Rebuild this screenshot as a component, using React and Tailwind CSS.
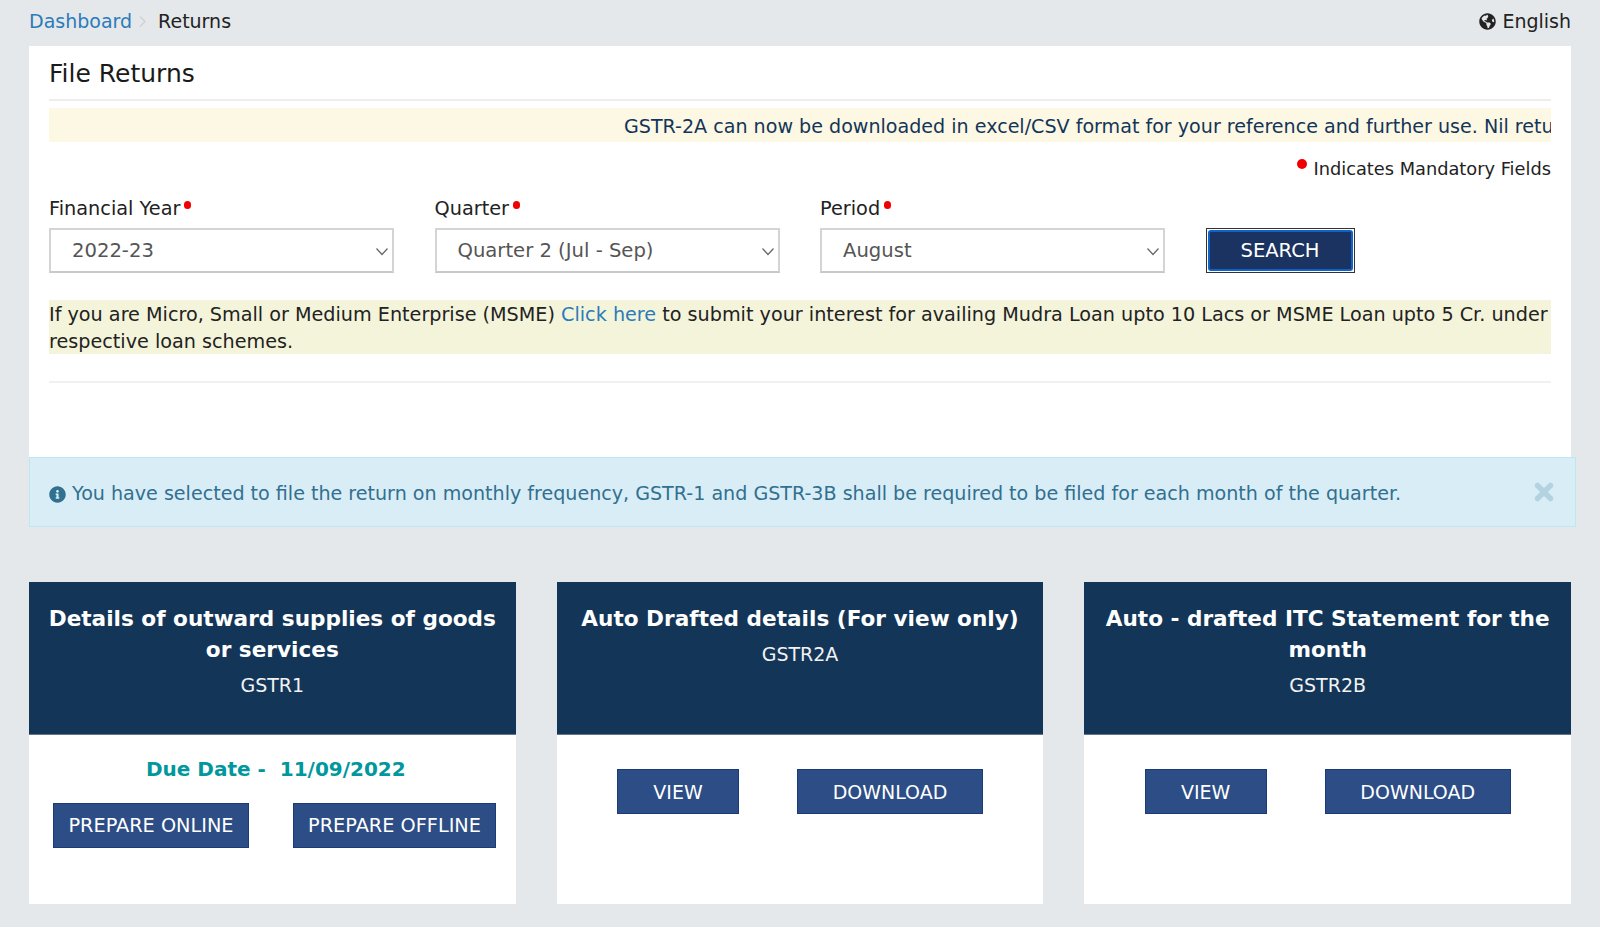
import React from "react";
import { FaGlobeAmericas, FaInfoCircle } from "react-icons/fa";

const Btn = ({ children, className = "" }) => (
  <button className={"bg-[#2c4d85] border border-[#1d3a78] text-white flex items-center justify-center pt-[2px] " + className}>{children}</button>
);

const Chevron = () => (
  <svg width="14" height="9" viewBox="0 0 14 9" className="absolute right-[3px] top-[17px]" fill="none" stroke="#666" strokeWidth="1.2"><path d="M1.5 1.5 7 7.5l5.5-6" /></svg>
);

const Select = ({ label, value }) => (
  <div className="w-[345px]">
    <div className="h-[35px] text-[19.3px] leading-[32px] text-[#222] flex">
      {label}<span className="ml-[4px] mt-[8px] w-[7px] h-[8px] rounded-full bg-[#f00000]" />
    </div>
    <div className="relative h-[45px] border-2 border-[#d4d4d4] border-b-[#c8c8c8] bg-white pl-[21px] flex items-center text-[19.6px] text-[#555]">
      {value}<Chevron />
    </div>
  </div>
);

const Card = ({ title, code, children }) => (
  <div className="bg-white flex-1 flex flex-col">
    <div className="h-[153px] bg-[#133558] border-b border-[#66758a] text-white text-center px-[12px] pt-[21px]">
      <div className="text-[21.6px] leading-[31px] font-bold">{title}</div>
      <div className="text-[19px] leading-[23px] mt-[9px] text-[#f2f2f2]">{code}</div>
    </div>
    {children}
  </div>
);

const TwoButtons = () => (
  <div className="flex justify-center gap-[58px] pt-[34px]">
    <Btn className="w-[122px] h-[45px] text-[19px]">VIEW</Btn>
    <Btn className="w-[186px] h-[45px] text-[19px]">DOWNLOAD</Btn>
  </div>
);

export default function App() {
  return (
    <div className="h-[927px] overflow-hidden bg-[#e4e8eb] px-[29px] font-['DejaVu_Sans',Verdana,sans-serif]">
      <div className="h-[42px] mb-[4px] flex items-center justify-between text-[19px]">
        <div className="flex items-center">
          <span className="text-[#2b7bba]">Dashboard</span>
          <svg width="7" height="11" viewBox="0 0 7 11" fill="none" stroke="#cfcfcf" strokeWidth="1.2" className="ml-[7px] mr-[12px]"><path d="M1 .5 6 5.5 1 10.5" /></svg>
          <span className="text-[#222]">Returns</span>
        </div>
        <div className="flex items-center gap-[6px] text-[#222]"><FaGlobeAmericas size={17} />English</div>
      </div>

      <div className="bg-white h-[411px] px-[20px]">
        <div className="h-[55px] border-b-2 border-[#eeeeee] text-[25px] leading-[56px] text-[#1a1a1a]">File Returns</div>
        <div className="mt-[7px] h-[34px] bg-[#fdf8e4] overflow-hidden whitespace-nowrap pl-[575px] text-[19.1px] leading-[38px] text-[#133558]">
          GSTR-2A can now be downloaded in excel/CSV format for your reference and further use. Nil return
        </div>
        <div className="mt-[13px] h-[27px] flex justify-end text-[17.8px] leading-[27px] text-[#222]">
          <span className="mt-[4px] mr-[6px] w-[10px] h-[10px] rounded-full bg-[#f00000]" />Indicates Mandatory Fields
        </div>
        <div className="mt-[11px] flex gap-[40.5px] items-end">
          <Select label="Financial Year" value="2022-23" />
          <Select label="Quarter" value="Quarter 2 (Jul - Sep)" />
          <Select label="Period" value="August" />
          <div className="w-[149px] h-[45px] border border-[#333] bg-white p-px">
            <button className="w-full h-full bg-[#1a3360] text-white text-[19.5px] rounded-[3px] border-2 border-[#0f62c9]">SEARCH</button>
          </div>
        </div>
        <div className="mt-[27px] h-[54px] pt-px bg-[#f4f4da] text-[19.2px] leading-[27px] text-[#222]">
          If you are Micro, Small or Medium Enterprise (MSME) <span className="text-[#2b7bba]">Click here</span> to submit your interest for availing Mudra Loan upto 10 Lacs or MSME Loan upto 5 Cr. under respective loan schemes.
        </div>
        <div className="mt-[27px] border-t-2 border-[#f0f0f0]" />
      </div>

      <div className="mr-[-5px] h-[70px] bg-[#d9edf7] border border-[#bce8f1] flex items-center pl-[19px] pr-[21px] text-[19.1px] text-[#31708f]">
        <FaInfoCircle size={17} className="mr-[6px] mt-[4px] shrink-0" />
        <span className="flex-1 mt-[4px]">You have selected to file the return on monthly frequency, GSTR-1 and GSTR-3B shall be required to be filed for each month of the quarter.</span>
        <svg width="20" height="20" viewBox="0 0 20 20" className="shrink-0"><path d="M3.5 3.5 16.5 16.5M16.5 3.5 3.5 16.5" stroke="#b3d3e0" strokeWidth="5.5" strokeLinecap="round" /></svg>
      </div>

      <div className="mt-[55px] flex gap-[41px] h-[322px]">
        <Card title="Details of outward supplies of goods or services" code="GSTR1">
          <div className="pt-[21px] pl-[7px] text-center text-[20px] leading-[27px] font-bold text-[#00979d] whitespace-pre">Due Date -  11/09/2022</div>
          <div className="pl-[24px] mt-[20px] flex gap-[44px]">
            <Btn className="w-[196px] h-[45px] text-[19.3px]">PREPARE ONLINE</Btn>
            <Btn className="w-[203px] h-[45px] text-[19.3px]">PREPARE OFFLINE</Btn>
          </div>
        </Card>
        <Card title="Auto Drafted details (For view only)" code="GSTR2A"><TwoButtons /></Card>
        <Card title="Auto - drafted ITC Statement for the month" code="GSTR2B"><TwoButtons /></Card>
      </div>
    </div>
  );
}
